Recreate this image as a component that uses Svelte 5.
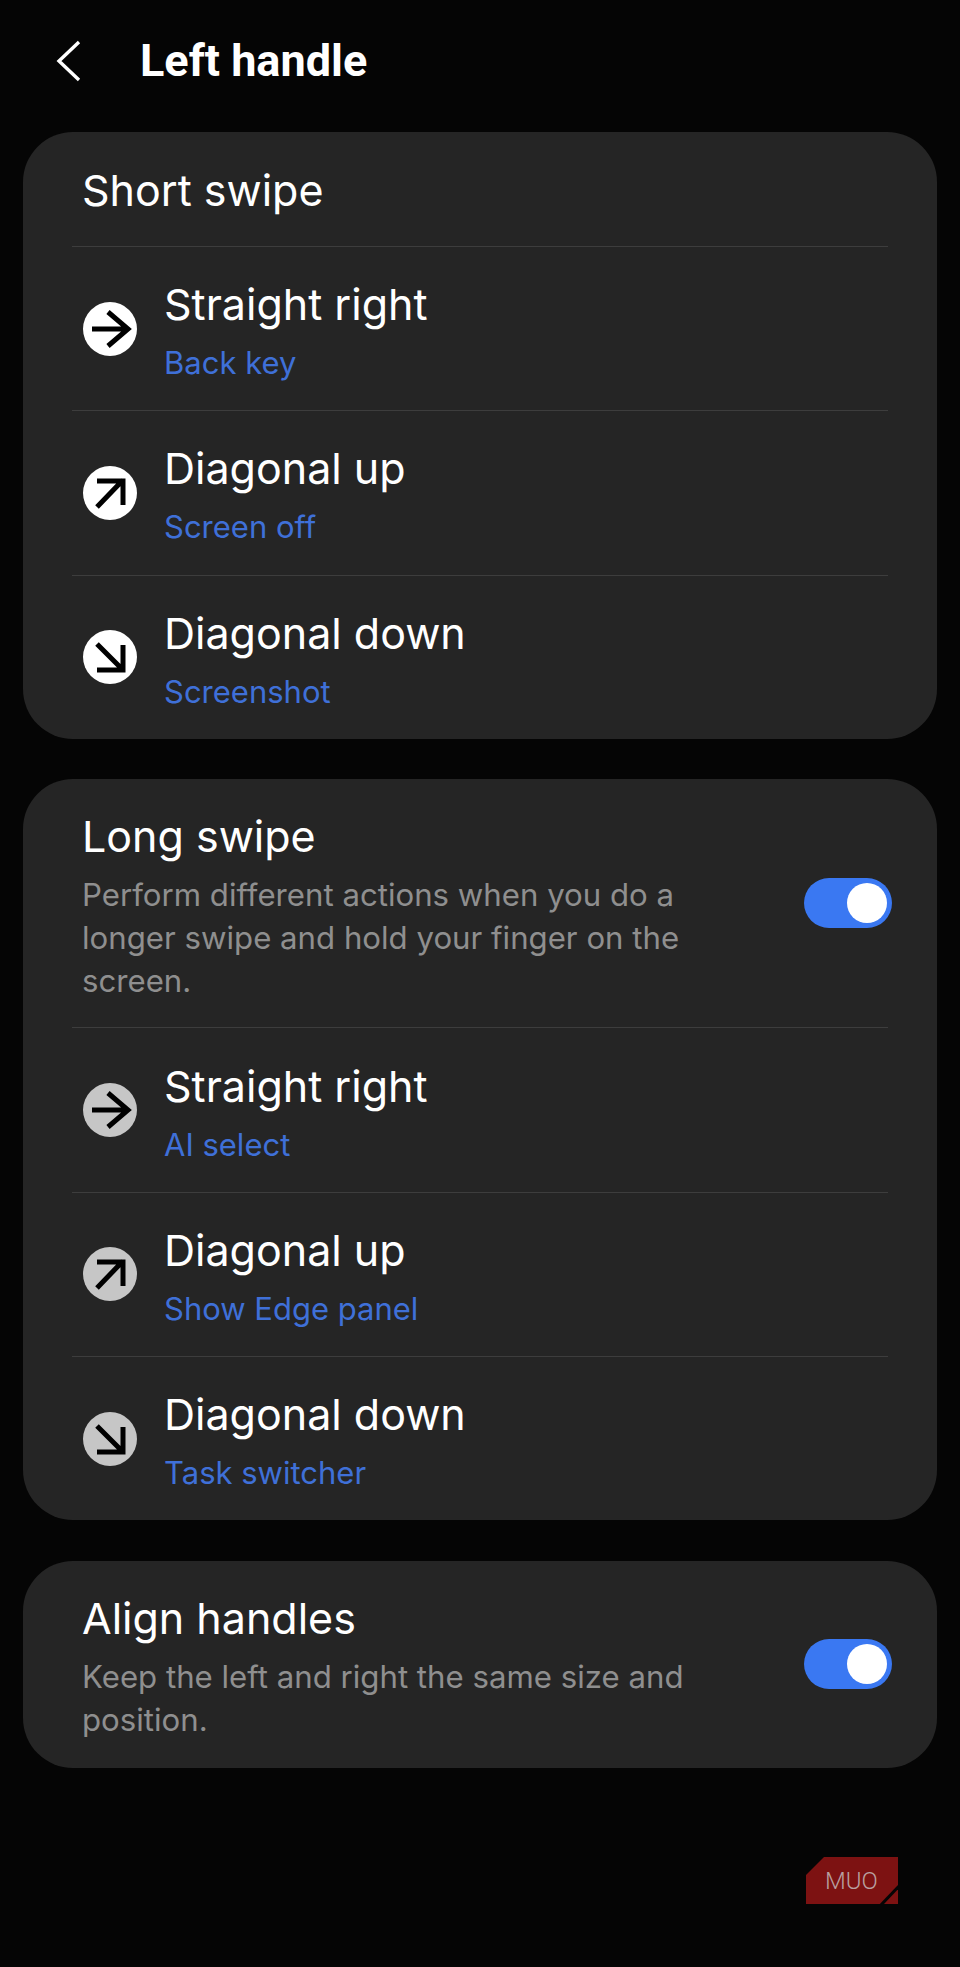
<script>
  const arrows = {
    right: 'M9 27H45M25 10L45 27L25 44',
    up: 'M14 41L40 14M14 15H40V39',
    down: 'M14 14L40 40M40 15V40H14'
  };

  const shortSwipe = [
    { name: 'Straight right', action: 'Back key', arrow: 'right' },
    { name: 'Diagonal up', action: 'Screen off', arrow: 'up' },
    { name: 'Diagonal down', action: 'Screenshot', arrow: 'down' }
  ];

  const longSwipe = [
    { name: 'Straight right', action: 'AI select', arrow: 'right' },
    { name: 'Diagonal up', action: 'Show Edge panel', arrow: 'up' },
    { name: 'Diagonal down', action: 'Task switcher', arrow: 'down' }
  ];
</script>

{#snippet gesture(item, dim)}
  <div class="divider"></div>
  <div class="row">
    <span class="badge" class:dim>
      <svg viewBox="0 0 54 54" width="54" height="54" fill="none" stroke="#000" stroke-width="5">
        <path d={arrows[item.arrow]} />
      </svg>
    </span>
    <div class="labels">
      <div class="name">{item.name}</div>
      <div class="action">{item.action}</div>
    </div>
  </div>
{/snippet}

<div class="page">
  <header>
    <svg class="back" viewBox="0 0 26 42" width="26" height="42" fill="none" stroke="#fff" stroke-width="3.4">
      <path d="M23 2L3 21L23 40" />
    </svg>
    <h1>Left handle</h1>
  </header>

  <section class="card">
    <div class="heading">Short swipe</div>
    {#each shortSwipe as item}
      {@render gesture(item, false)}
    {/each}
  </section>

  <section class="card">
    <div class="switch-row long">
      <div class="switch-text">
        <div class="name">Long swipe</div>
        <p>Perform different actions when you do a longer swipe and hold your finger on the screen.</p>
      </div>
      <span class="toggle"><span class="thumb"></span></span>
    </div>
    {#each longSwipe as item}
      {@render gesture(item, true)}
    {/each}
  </section>

  <section class="card">
    <div class="switch-row align">
      <div class="switch-text">
        <div class="name">Align handles</div>
        <p>Keep the left and right the same size and position.</p>
      </div>
      <span class="toggle"><span class="thumb"></span></span>
    </div>
  </section>

  <div class="watermark">
    <svg viewBox="0 0 92 47" width="92" height="47">
      <path d="M18 0H92V47H0V18Z" fill="#7d1212" />
      <path d="M94 28L74 49" stroke="#050505" stroke-width="3" />
    </svg>
    <span>MUO</span>
  </div>
</div>

<style>
  :global(body) {
    margin: 0;
    background: #050505;
  }

  .page {
    position: relative;
    height: 1967px;
    padding: 0 23px;
    box-sizing: border-box;
    background: #050505;
    color: #fff;
    font-family: Inter, "Liberation Sans", sans-serif;
    overflow: hidden;
  }

  header {
    height: 132px;
    display: flex;
    align-items: center;
    padding: 0 0 11px 33px;
    box-sizing: border-box;
  }

  .back {
    display: block;
  }

  h1 {
    margin: 0 0 0 58px;
    font-family: Roboto, "Liberation Sans", sans-serif;
    font-size: 45px;
    font-weight: 700;
    line-height: 48px;
  }

  .card {
    background: #252525;
    border-radius: 50px;
    margin-bottom: 40.5px;
  }

  .heading {
    height: 114px;
    line-height: 116px;
    padding-left: 59px;
    font-size: 43px;
  }

  .divider {
    height: 1px;
    margin: 0 49px;
    background: #3d3d3d;
  }

  .row {
    height: 163.3px;
    display: flex;
    align-items: center;
    padding-left: 60px;
  }

  .badge {
    width: 54px;
    height: 54px;
    flex: none;
    border-radius: 50%;
    background: #fff;
    margin-right: 27px;
  }

  .badge.dim {
    background: #c6c6c6;
  }

  .badge svg {
    display: block;
  }

  .name {
    font-size: 43px;
    line-height: 50px;
    white-space: nowrap;
  }

  .action {
    margin-top: 15px;
    font-size: 31px;
    line-height: 38px;
    color: #3f70d8;
  }

  .labels {
    margin-top: 4px;
  }

  .switch-row {
    display: flex;
    align-items: flex-start;
    justify-content: space-between;
    padding: 32px 45px 0 59px;
    box-sizing: border-box;
  }

  .switch-row.long {
    height: 248px;
  }

  .switch-row.align {
    height: 207px;
  }

  .switch-text p {
    margin: 13px 0 0;
    width: 620px;
    font-size: 31.2px;
    line-height: 43px;
    color: #8f8f8f;
  }

  .toggle {
    position: relative;
    flex: none;
    width: 88px;
    height: 50px;
    margin-top: 67px;
    border-radius: 25px;
    background: #3a78f2;
  }

  .align .toggle {
    margin-top: 46px;
  }

  .thumb {
    position: absolute;
    top: 5px;
    right: 5px;
    width: 40px;
    height: 40px;
    border-radius: 50%;
    background: #fff;
  }

  .watermark {
    position: absolute;
    left: 806px;
    top: 1857px;
    width: 92px;
    height: 47px;
  }

  .watermark svg {
    display: block;
  }

  .watermark span {
    position: absolute;
    left: 19px;
    top: 13px;
    color: #b9a0a0;
    font-family: Roboto, sans-serif;
    font-size: 24px;
    line-height: 22px;
    font-weight: 300;
  }
</style>
